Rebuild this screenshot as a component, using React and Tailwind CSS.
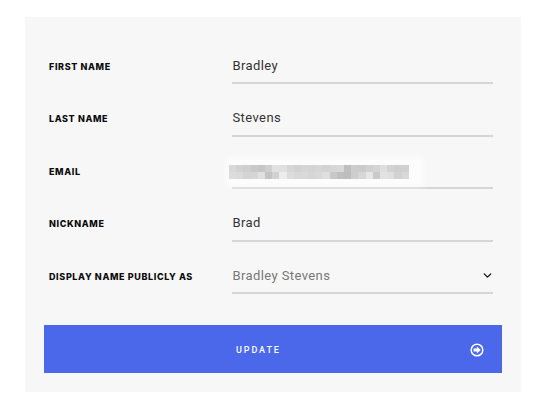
import { ChevronDown } from "lucide-react";

const fields = [
    { label: "First Name", value: "Bradley" },
    { label: "Last Name", value: "Stevens" },
    { label: "Email", blurred: true },
    { label: "Nickname", value: "Brad" },
    { label: "Display Name Publicly As", value: "Bradley Stevens", select: true },
];

// censored email, two rows of mosaic cells
const mosaic = [
    ["#d8d8d8", "#d2d2d2", "#cfcfcf", "#c9c9c9", "#c6c6c6", "#cfcfcf", "#e2e2e2", "#e0e0e0", "#d6d6d6", "#d2d2d2", "#d5d5d5", "#d4d4d4", "#d6d6d6", "#d3d3d3", "#d6d6d6", "#d8d8d8", "#bfbfbf", "#cdcdcd", "#cbcbcb", "#d0d0d0", "#d4d4d4", "#dedede", "#d2d2d2", "#cfcfcf", "#d0d0d0"],
    ["#dcdcdc", "#dadada", "#d4d4d4", "#d6d6d6", "#e0e0e0", "#c4c4c4", "#d2d2d2", "#ececec", "#dcdcdc", "#d8d8d8", "#d9d9d9", "#d6d6d6", "#d8d8d8", "#dfdfdf", "#c8c8c8", "#c0c0c0", "#bdbdbd", "#cecece", "#d6d6d6", "#e6e6e6", "#c9c9c9", "#e2e2e2", "#e0e0e0", "#d2d2d2", "#d8d8d8"],
];

function Mosaic() {
    return (
        <div className="-ml-[3px] mt-[2px] bg-white/60 py-[5px] pr-[12px] w-fit shadow-[0_0_6px_3px_rgba(255,255,255,0.6)]">
            {mosaic.map((row, r) => (
                <div key={r} className="flex h-[7px]">
                    {row.map((color, c) => (
                        <div key={c} className="w-[7.2px] h-full" style={{ backgroundColor: color }} />
                    ))}
                </div>
            ))}
        </div>
    );
}

export default function App() {
    return (
        <div className="w-[538px] h-[416px] bg-white pt-[17px] pl-[25px] font-['Roboto',sans-serif]">
            <div className="w-[496px] h-[375px] bg-[#f7f7f7] pt-[23px] pl-[19px]">
                <div className="flex flex-col">
                    {fields.map((field) => (
                        <div key={field.label} className="flex h-[52.5px]">
                            <div className="w-[188px] pl-[5px] pt-[9px] h-[43px] flex items-center font-['Inter',sans-serif] text-[9px] leading-none font-extrabold uppercase tracking-[0.62px] text-[#0c0c0c]">
                                {field.label}
                            </div>
                            <div className="w-[261px] h-[44px] pt-[9px] border-b-2 border-[#d6d6d6] flex items-center justify-between">
                                {field.blurred ? (
                                    <Mosaic />
                                ) : (
                                    <span className={`pl-[0.5px] text-[13px] tracking-[0.4px] ${field.select ? "text-[#777]" : "text-[#333]"}`}>
                                        {field.value}
                                    </span>
                                )}
                                {field.select && <ChevronDown size={13} strokeWidth={2.5} className="text-[#111] mr-[-1px]" />}
                            </div>
                        </div>
                    ))}
                </div>
                <button className="mt-[22px] w-[458px] h-[48px] bg-[#4c68ea] flex items-center justify-between pl-[192px] pr-[18px] text-white">
                    <span className="pt-[5px] text-[9px] font-medium uppercase tracking-[1.9px]">Update</span>
                    <svg className="mt-[2px]" width="14" height="14" viewBox="0 0 14 14" fill="none">
                        <circle cx="7" cy="7" r="5.8" stroke="white" strokeWidth="1.5" />
                        <path d="M3.6 5.6h3.2V3.4L10.8 7 6.8 10.6V8.4H3.6z" fill="white" />
                    </svg>
                </button>
            </div>
        </div>
    );
}
